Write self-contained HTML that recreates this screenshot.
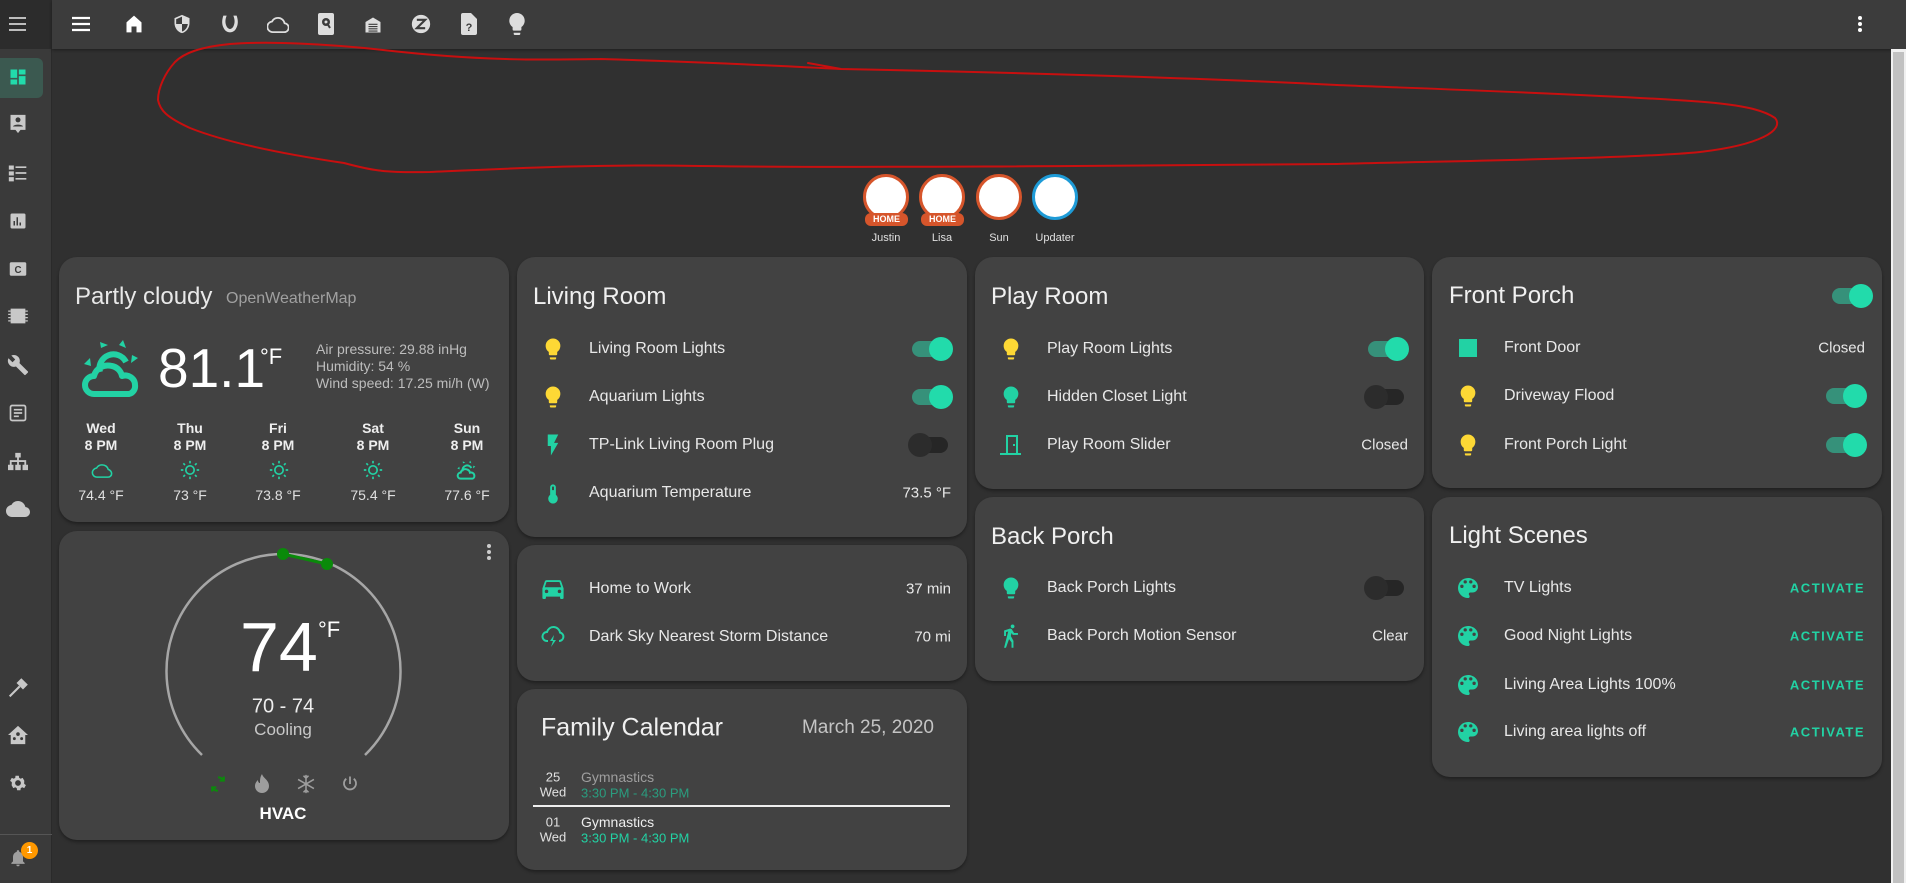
<!DOCTYPE html>
<html><head><meta charset="utf-8"><style>
*{box-sizing:border-box;margin:0;padding:0}
body{width:1906px;height:883px;overflow:hidden;background:#303030;font-family:"Liberation Sans",Arial,sans-serif;color:#e1e1e1;position:relative}
.a{position:absolute}
.card{position:absolute;background:#424242;border-radius:18px;box-shadow:0 2px 3px rgba(0,0,0,.35)}
.t{position:absolute;white-space:nowrap}
.title{font-size:24px;color:#f0f0f0}
.row{font-size:16px;color:#e8e8e8}
.ic{position:absolute;transform:translate(-50%,-50%)}
.tg{position:absolute;width:43px;height:24px;transform:translateY(-50%)}
.tg .tr{position:absolute;left:4px;top:4px;width:34px;height:16px;border-radius:8px;background:#36917a}
.tg .kn{position:absolute;top:0;left:21px;width:24px;height:24px;border-radius:50%;background:#22dbab}
.tg.off .tr{background:#262626}
.tg.off .kn{left:-2px;background:#2c2c2c}
.val{position:absolute;font-size:15px;color:#e8e8e8;transform:translate(-100%,-50%);white-space:nowrap}
.act{position:absolute;font-size:13px;font-weight:bold;color:#22d2a4;letter-spacing:1.5px;transform:translate(-100%,-50%)}
.rt{transform:translateY(-50%)}
.fc{position:absolute;text-align:center;transform:translateX(-50%);font-size:14px;font-weight:bold;color:#eee;line-height:17px}
.ft{position:absolute;transform:translate(-50%,-50%);font-size:14px;color:#e0e0e0;white-space:nowrap}
</style></head><body>

<!-- sidebar -->
<div class="a" style="left:0;top:0;width:52px;height:883px;background:#3a3a3a;border-right:1px solid #2a2a2a"></div>
<div class="a" style="left:0;top:0;width:52px;height:49px;background:#2c2c2c"></div>
<svg class="a" style="left:8px;top:15px" width="20" height="18" viewBox="0 0 20 18"><path d="M1 3h17M1 9h17M1 15h17" stroke="#bdbdbd" stroke-width="2"/></svg>
<div class="a" style="left:0;top:58px;width:43px;height:40px;background:#3b5950;border-radius:0 6px 6px 0"></div>
<svg class="ic" style="left:18px;top:77px" width="20" height="20" viewBox="0 0 24 24"><path d="M3 3h8v10H3zM13 3h8v6h-8zM3 15h8v6H3zM13 11h8v10h-8z" fill="#22dbab"/></svg>
<svg class="ic" style="left:18px;top:124px" width="20" height="22" viewBox="0 0 24 26"><path d="M3 2h18v18h-6l-3 4-3-4H3z" fill="#c8c8c8"/><circle cx="12" cy="8" r="3" fill="#3a3a3a"/><path d="M6 16c1-3 11-3 12 0z" fill="#3a3a3a"/></svg>
<svg class="ic" style="left:18px;top:173px" width="20" height="20" viewBox="0 0 24 24"><path d="M2 4h4v3H2zM9 5h13M2 11h4v3H2zM9 12h13M2 18h4v3H2zM9 19h13" stroke="#c8c8c8" stroke-width="2" fill="#c8c8c8"/></svg>
<svg class="ic" style="left:18px;top:221px" width="18" height="18" viewBox="0 0 24 24"><rect x="2" y="2" width="20" height="20" rx="2" fill="#c8c8c8"/><path d="M7 18v-6M11 18V7M15 18v-4" stroke="#3a3a3a" stroke-width="2"/></svg>
<svg class="ic" style="left:18px;top:269px" width="18" height="16" viewBox="0 0 24 20"><rect x="1" y="1" width="22" height="18" rx="2" fill="#c8c8c8"/><text x="12" y="15" font-size="13" font-weight="bold" text-anchor="middle" fill="#3a3a3a" font-family="Liberation Sans">C</text></svg>
<svg class="ic" style="left:18px;top:316px" width="20" height="18" viewBox="0 0 24 22"><rect x="3" y="2" width="18" height="18" fill="#c8c8c8"/><path d="M0 5h3M0 9h3M0 13h3M0 17h3M21 5h3M21 9h3M21 13h3M21 17h3" stroke="#c8c8c8" stroke-width="1.5"/></svg>
<svg class="ic" style="left:18px;top:365px" width="22" height="22" viewBox="0 0 24 24"><path d="M22.7 19l-9.1-9.1c.9-2.3.4-5-1.5-6.9-2-2-5-2.4-7.4-1.3L9 6 6 9 1.6 4.7C.4 7.1.9 10.1 2.9 12.1c1.9 1.9 4.6 2.4 6.9 1.5l9.1 9.1c.4.4 1 .4 1.4 0l2.3-2.3c.5-.4.5-1.1.1-1.4z" fill="#c8c8c8"/></svg>
<svg class="ic" style="left:18px;top:413px" width="20" height="20" viewBox="0 0 24 24"><rect x="3" y="3" width="18" height="18" rx="2" fill="none" stroke="#c8c8c8" stroke-width="2"/><path d="M7 8h10M7 12h10M7 16h6" stroke="#c8c8c8" stroke-width="2"/></svg>
<svg class="ic" style="left:18px;top:462px" width="22" height="20" viewBox="0 0 24 22"><path d="M9 1h6v5h-2v3h8v5h2v6h-6v-6h2v-3h-6v3h2v6H9v-6h2v-3H5v3h2v6H1v-6h2V9h8V6H9z" fill="#c8c8c8"/></svg>
<svg class="ic" style="left:18px;top:509px" width="24" height="18" viewBox="0 0 24 18"><path d="M19.4 7C18.7 3.6 15.7 1 12 1 9.1 1 6.6 2.6 5.4 5 2.3 5.4 0 7.9 0 11c0 3.3 2.7 6 6 6h13c2.8 0 5-2.2 5-5 0-2.6-2-4.8-4.6-5z" fill="#c8c8c8"/></svg>
<svg class="ic" style="left:18px;top:688px" width="20" height="20" viewBox="0 0 24 24"><path d="M2 22L14 10M12 6l4-4 6 6-4 4z" stroke="#c8c8c8" stroke-width="2.5" fill="#c8c8c8"/></svg>
<svg class="ic" style="left:18px;top:735px" width="22" height="20" viewBox="0 0 24 22"><path d="M12 1L1 11h3v10h16V11h3z" fill="#c8c8c8"/><circle cx="12" cy="10" r="2" fill="#3a3a3a"/><circle cx="8" cy="15" r="1.6" fill="#3a3a3a"/><circle cx="16" cy="15" r="1.6" fill="#3a3a3a"/></svg>
<svg class="ic" style="left:18px;top:783px" width="20" height="20" viewBox="0 0 24 24"><path d="M12 15.5A3.5 3.5 0 1 1 12 8.5a3.5 3.5 0 0 1 0 7zm7.4-2.5l2.1 1.6-2 3.5-2.5-1a7.3 7.3 0 0 1-1.7 1l-.4 2.6h-4l-.4-2.6a7.3 7.3 0 0 1-1.7-1l-2.5 1-2-3.5L4.6 13a7 7 0 0 1 0-2L2.5 9.4l2-3.5 2.5 1c.5-.4 1.1-.7 1.7-1L9 3.3h4l.4 2.6c.6.3 1.200.6 1.7 1l2.5-1 2 3.5L19.4 11a7 7 0 0 1 0 2z" fill="#c8c8c8" fill-rule="evenodd"/></svg>
<div class="a" style="left:0;top:834px;width:52px;height:1px;background:#555"></div>
<svg class="ic" style="left:18px;top:858px" width="20" height="20" viewBox="0 0 24 24"><path d="M12 22a2 2 0 0 0 2-2h-4a2 2 0 0 0 2 2zm6-6v-5c0-3-1.6-5.6-4.5-6.3V4a1.5 1.5 0 0 0-3 0v.7C7.6 5.4 6 8 6 11v5l-2 2v1h16v-1z" fill="#9e9e9e"/></svg>
<div class="a" style="left:21px;top:842px;width:17px;height:17px;border-radius:50%;background:#ff9800;color:#fff;font-size:10px;font-weight:bold;text-align:center;line-height:17px">1</div>

<!-- top bar -->
<div class="a" style="left:52px;top:0;width:1854px;height:49px;background:#3c3c3c;box-shadow:0 1px 3px rgba(0,0,0,.4)"></div>
<svg class="ic" style="left:81px;top:24px" width="20" height="16" viewBox="0 0 20 16"><path d="M1 2h18M1 8h18M1 14h18" stroke="#fff" stroke-width="2.2"/></svg>
<svg class="ic" style="left:134px;top:24px" width="20" height="20" viewBox="0 0 24 24"><path d="M12 2L3 10v12h6v-7h6v7h6V10z" fill="#fff"/></svg>
<svg class="ic" style="left:182px;top:24px" width="20" height="22" viewBox="0 0 24 24"><path d="M12 1L3 5v6c0 5.5 3.8 10.7 9 12 5.2-1.3 9-6.5 9-12V5z" fill="#ddd"/><path d="M12 3.2v8.8H5V6.3zM12 12h7c-.5 4.2-3.3 8-7 9z" fill="#3c3c3c"/></svg>
<svg class="ic" style="left:230px;top:24px" width="20" height="22" viewBox="0 0 24 24"><path d="M4 2h4c-2 5-2 9 0 13 1 2 3 3 4 3s3-1 4-3c2-4 2-8 0-13h4c2 6 2 11-1 16-1.6 2.7-4.3 4-7 4s-5.4-1.3-7-4C2 13 2 8 4 2z" fill="#ddd"/></svg>
<svg class="ic" style="left:278px;top:25px" width="22" height="16" viewBox="0 0 24 18"><path d="M19.4 7C18.7 3.6 15.7 1 12 1 9.1 1 6.6 2.6 5.4 5 2.3 5.4 0 7.9 0 11c0 3.3 2.7 6 6 6h13c2.8 0 5-2.2 5-5 0-2.6-2-4.8-4.6-5z" fill="none" stroke="#ddd" stroke-width="2"/></svg>
<svg class="ic" style="left:326px;top:24px" width="16" height="22" viewBox="0 0 16 22"><rect x="0" y="0" width="16" height="22" rx="2" fill="#ddd"/><circle cx="8" cy="9" r="4" fill="#3c3c3c"/><circle cx="8" cy="9" r="1.5" fill="#ddd"/><path d="M9 10l3 5" stroke="#3c3c3c" stroke-width="2"/></svg>
<svg class="ic" style="left:373px;top:25px" width="18" height="18" viewBox="0 0 24 24"><path d="M12 2L2 8v14h20V8z" fill="#ddd"/><path d="M6 11h12M6 14h12M6 17h12M6 20h12" stroke="#3c3c3c" stroke-width="1.5"/></svg>
<svg class="ic" style="left:421px;top:24px" width="20" height="20" viewBox="0 0 24 24"><circle cx="12" cy="12" r="11" fill="#ddd"/><path d="M7 7h10L7 17h10" stroke="#3c3c3c" stroke-width="2.6" fill="none"/></svg>
<svg class="ic" style="left:469px;top:24px" width="16" height="22" viewBox="0 0 16 22"><path d="M0 2a2 2 0 0 1 2-2h8l6 6v14a2 2 0 0 1-2 2H2a2 2 0 0 1-2-2z" fill="#ddd"/><text x="8" y="18" font-size="11" font-weight="bold" text-anchor="middle" fill="#3c3c3c" font-family="Liberation Sans">?</text></svg>
<svg class="ic" style="left:517px;top:24px" width="16" height="22" viewBox="5 2 14 20"><path d="M12,2A7,7 0 0,0 5,9C5,11.38 6.19,13.47 8,14.74V17A1,1 0 0,0 9,18H15A1,1 0 0,0 16,17V14.74C17.81,13.47 19,11.38 19,9A7,7 0 0,0 12,2M9,21A1,1 0 0,0 10,22H14A1,1 0 0,0 15,21V20H9V21Z" fill="#ddd"/></svg>
<svg class="ic" style="left:1860px;top:24px" width="6" height="18" viewBox="0 0 6 18"><circle cx="3" cy="3" r="2" fill="#fff"/><circle cx="3" cy="9" r="2" fill="#fff"/><circle cx="3" cy="15" r="2" fill="#fff"/></svg>

<!-- scrollbar -->
<div class="a" style="left:1891px;top:49px;width:15px;height:834px;background:#f0f0f0"></div>
<div class="a" style="left:1893px;top:52px;width:11px;height:831px;background:#c1c1c1"></div>

<!-- red scribble -->
<svg class="a" style="left:0;top:0" width="1906" height="883"><path d="M808,63 L841,69 M600,59 C540,60 480,61 383,50 C330,44 268,41 230,44 C200,47 184,53 175,62 C165,73 158,88 158,100 C160,110 166,117 190,128 C230,144 290,155 344,163 C370,170 383,173 430,172 C520,168 600,164 700,166 C850,168 1100,166 1337,164 C1500,160 1640,158 1700,152 C1760,145 1785,130 1775,118 C1755,104 1710,101 1600,96 C1480,90 1380,87 1337,85 C1200,78 1000,72 841,69 C760,65 700,62 600,59" stroke="#c80f0f" stroke-width="2" fill="none" stroke-linecap="round"/></svg>

<!-- badges -->
<div class="a" style="left:863px;top:174px;width:46px;height:46px;border-radius:50%;background:#fff;border:3px solid #d6552b"></div>
<div class="a" style="left:919px;top:174px;width:46px;height:46px;border-radius:50%;background:#fff;border:3px solid #d6552b"></div>
<div class="a" style="left:976px;top:174px;width:46px;height:46px;border-radius:50%;background:#fff;border:3px solid #d6552b"></div>
<div class="a" style="left:1032px;top:174px;width:46px;height:46px;border-radius:50%;background:#fff;border:3px solid #1e9bd7"></div>
<div class="a" style="left:865px;top:213px;width:43px;height:13px;border-radius:6px;background:#d6552b;color:#fff;font-size:9px;font-weight:bold;text-align:center;line-height:13px">HOME</div>
<div class="a" style="left:921px;top:213px;width:43px;height:13px;border-radius:6px;background:#d6552b;color:#fff;font-size:9px;font-weight:bold;text-align:center;line-height:13px">HOME</div>
<div class="ft" style="left:886px;top:238px;font-size:11px">Justin</div>
<div class="ft" style="left:942px;top:238px;font-size:11px">Lisa</div>
<div class="ft" style="left:999px;top:238px;font-size:11px">Sun</div>
<div class="ft" style="left:1055px;top:238px;font-size:11px">Updater</div>

<!-- weather card -->
<div class="card" style="left:59px;top:257px;width:450px;height:265px"></div>
<div class="t title rt" style="left:75px;top:297px;color:#e8e8e8">Partly cloudy</div>
<div class="t rt" style="left:226px;top:299px;font-size:16px;color:#a0a0a0">OpenWeatherMap</div>
<svg class="a" style="left:80px;top:336px" width="66" height="64" viewBox="0 0 66 64"><path d="M20 6l8 3-7 3zM43 4l3 8-7-3zM58 22l-7 5 1-8zM4 28l6-6 1 8z" fill="#22d2a4"/><path d="M20 36a14 14 0 0 1 26-10" stroke="#22d2a4" stroke-width="6" fill="none"/><path d="M14 58a9 9 0 0 1 0-18c2-8 10-12 18-10 5 1 9 5 10 10 6-2 13 2 13 9a8 8 0 0 1-6 9z" stroke="#22d2a4" stroke-width="6" fill="none" stroke-linejoin="round"/></svg>
<div class="t" style="left:158px;top:336px;font-size:55px;color:#fff">81.1</div>
<div class="t" style="left:260px;top:344px;font-size:22px;color:#fff">°F</div>
<div class="t" style="left:316px;top:341px;font-size:14px;color:#bdbdbd;line-height:17px">Air pressure: 29.88 inHg<br>Humidity: 54 %<br>Wind speed: 17.25 mi/h (W)</div>
<div class="fc" style="left:101px;top:420px">Wed<br>8 PM</div>
<div class="fc" style="left:190px;top:420px">Thu<br>8 PM</div>
<div class="fc" style="left:278px;top:420px">Fri<br>8 PM</div>
<div class="fc" style="left:373px;top:420px">Sat<br>8 PM</div>
<div class="fc" style="left:467px;top:420px">Sun<br>8 PM</div>
<svg class="ic" style="left:102px;top:471px" width="22" height="14" viewBox="0 0 24 16"><path d="M19 6C18.3 3 15.5 1 12 1 9.3 1 7 2.5 5.8 4.6 3 5 1 7.3 1 10c0 2.8 2.2 5 5 5h13c2.2 0 4-1.8 4-4s-1.8-4-4-5z" fill="none" stroke="#22d2a4" stroke-width="1.8"/></svg>
<svg class="ic" style="left:190px;top:470px" width="20" height="20" viewBox="0 0 24 24"><circle cx="12" cy="12" r="5" fill="none" stroke="#22d2a4" stroke-width="2"/><path d="M12 1v3M12 20v3M1 12h3M20 12h3M4 4l2 2M18 18l2 2M4 20l2-2M18 6l2-2" stroke="#22d2a4" stroke-width="2"/></svg>
<svg class="ic" style="left:279px;top:470px" width="20" height="20" viewBox="0 0 24 24"><circle cx="12" cy="12" r="5" fill="none" stroke="#22d2a4" stroke-width="2"/><path d="M12 1v3M12 20v3M1 12h3M20 12h3M4 4l2 2M18 18l2 2M4 20l2-2M18 6l2-2" stroke="#22d2a4" stroke-width="2"/></svg>
<svg class="ic" style="left:373px;top:470px" width="20" height="20" viewBox="0 0 24 24"><circle cx="12" cy="12" r="5" fill="none" stroke="#22d2a4" stroke-width="2"/><path d="M12 1v3M12 20v3M1 12h3M20 12h3M4 4l2 2M18 18l2 2M4 20l2-2M18 6l2-2" stroke="#22d2a4" stroke-width="2"/></svg>
<svg class="ic" style="left:467px;top:470px" width="22" height="22" viewBox="0 0 66 64"><path d="M20 6l8 3-7 3zM43 4l3 8-7-3zM58 22l-7 5 1-8zM4 28l6-6 1 8z" fill="#22d2a4"/><path d="M20 36a14 14 0 0 1 26-10" stroke="#22d2a4" stroke-width="6" fill="none"/><path d="M14 58a9 9 0 0 1 0-18c2-8 10-12 18-10 5 1 9 5 10 10 6-2 13 2 13 9a8 8 0 0 1-6 9z" stroke="#22d2a4" stroke-width="6" fill="none"/></svg>
<div class="ft" style="left:101px;top:495px">74.4 °F</div>
<div class="ft" style="left:190px;top:495px">73 °F</div>
<div class="ft" style="left:278px;top:495px">73.8 °F</div>
<div class="ft" style="left:373px;top:495px">75.4 °F</div>
<div class="ft" style="left:467px;top:495px">77.6 °F</div>

<!-- thermostat -->
<div class="card" style="left:59px;top:531px;width:450px;height:309px"></div>
<svg class="a" style="left:59px;top:531px" width="450" height="309"><path d="M143 224 A117 117 0 1 1 306 224" stroke="#a6a6a6" stroke-width="2.5" fill="none"/><path d="M224 23 L268 33" stroke="#0a8a0a" stroke-width="3"/><circle cx="224" cy="23" r="6" fill="#0a8a0a"/><circle cx="268" cy="33" r="6" fill="#0a8a0a"/><circle cx="430" cy="15" r="2" fill="#ccc"/><circle cx="430" cy="21" r="2" fill="#ccc"/><circle cx="430" cy="27" r="2" fill="#ccc"/></svg>
<div class="t" style="left:240px;top:607px;font-size:70px;color:#fff">74</div>
<div class="t" style="left:318px;top:617px;font-size:22px;color:#fff">°F</div>
<div class="ft" style="left:283px;top:707px;font-size:20px;color:#eee">70 - 74</div>
<div class="ft" style="left:283px;top:730px;font-size:17px;color:#c8c8c8">Cooling</div>
<svg class="ic" style="left:218px;top:784px" width="20" height="22" viewBox="0 0 24 24"><path d="M12 4a8 8 0 0 1 7 4M19 3v5h-5M12 20a8 8 0 0 1-7-4M5 21v-5h5" stroke="#0b8a0b" stroke-width="2.4" fill="none"/></svg>
<svg class="ic" style="left:262px;top:784px" width="16" height="20" viewBox="0 0 16 20"><path d="M8 0c1 4 7 6 7 12a7 7 0 0 1-14 0c0-3 2-5 3-6 0 2 1 3 2 3 0-3 0-6 2-9z" fill="#9e9e9e"/></svg>
<svg class="ic" style="left:306px;top:784px" width="20" height="20" viewBox="0 0 24 24"><path d="M12 1v22M2.5 6.5l19 11M2.5 17.5l19-11M9 2l3 3 3-3M9 22l3-3 3 3" stroke="#9e9e9e" stroke-width="1.8" fill="none"/></svg>
<svg class="ic" style="left:350px;top:784px" width="18" height="20" viewBox="0 0 24 24"><path d="M12 2v10M7 5a8 8 0 1 0 10 0" stroke="#9e9e9e" stroke-width="2.4" fill="none"/></svg>
<div class="ft" style="left:283px;top:814px;font-size:17px;font-weight:bold;color:#fff">HVAC</div>

<!-- Living Room -->
<div class="card" style="left:517px;top:257px;width:450px;height:280px"></div>
<div class="t title rt" style="left:533px;top:297px">Living Room</div>
<svg class="ic" style="left:553px;top:349px" width="15" height="21" viewBox="5 2 14 20"><path d="M12,2A7,7 0 0,0 5,9C5,11.38 6.19,13.47 8,14.74V17A1,1 0 0,0 9,18H15A1,1 0 0,0 16,17V14.74C17.81,13.47 19,11.38 19,9A7,7 0 0,0 12,2M9,21A1,1 0 0,0 10,22H14A1,1 0 0,0 15,21V20H9V21Z" fill="#fdd835"/></svg>
<div class="t row rt" style="left:589px;top:349px">Living Room Lights</div>
<div class="tg" style="left:908px;top:349px"><div class="tr"></div><div class="kn"></div></div>
<svg class="ic" style="left:553px;top:397px" width="15" height="21" viewBox="5 2 14 20"><path d="M12,2A7,7 0 0,0 5,9C5,11.38 6.19,13.47 8,14.74V17A1,1 0 0,0 9,18H15A1,1 0 0,0 16,17V14.74C17.81,13.47 19,11.38 19,9A7,7 0 0,0 12,2M9,21A1,1 0 0,0 10,22H14A1,1 0 0,0 15,21V20H9V21Z" fill="#fdd835"/></svg>
<div class="t row rt" style="left:589px;top:397px">Aquarium Lights</div>
<div class="tg" style="left:908px;top:397px"><div class="tr"></div><div class="kn"></div></div>
<svg class="ic" style="left:553px;top:445px" width="12" height="21" viewBox="7 2 10 20"><path d="M7,2V13H10V22L17,10H13L17,2H7Z" fill="#22d2a4"/></svg>
<div class="t row rt" style="left:589px;top:445px">TP-Link Living Room Plug</div>
<div class="tg off" style="left:910px;top:445px"><div class="tr"></div><div class="kn"></div></div>
<svg class="ic" style="left:553px;top:493px" width="12" height="21" viewBox="7 0 10 22"><path d="M15 13V5A3 3 0 0 0 9 5V13A5 5 0 1 0 15 13M12 4A1 1 0 0 1 13 5V8H11V5A1 1 0 0 1 12 4Z" fill="#22d2a4"/></svg>
<div class="t row rt" style="left:589px;top:493px">Aquarium Temperature</div>
<div class="val" style="left:951px;top:493px">73.5 °F</div>

<!-- travel -->
<div class="card" style="left:517px;top:545px;width:450px;height:136px"></div>
<svg class="ic" style="left:553px;top:589px" width="22" height="20" viewBox="3 4 18 17"><path d="M5,11L6.5,6.5H17.5L19,11M17.5,16A1.5,1.5 0 0,1 16,14.5A1.5,1.5 0 0,1 17.5,13A1.5,1.5 0 0,1 19,14.5A1.5,1.5 0 0,1 17.5,16M6.5,16A1.5,1.5 0 0,1 5,14.5A1.5,1.5 0 0,1 6.5,13A1.5,1.5 0 0,1 8,14.5A1.5,1.5 0 0,1 6.5,16M18.92,6C18.72,5.42 18.16,5 17.5,5H6.5C5.84,5 5.28,5.42 5.08,6L3,12V20A1,1 0 0,0 4,21H5A1,1 0 0,0 6,20V19H18V20A1,1 0 0,0 19,21H20A1,1 0 0,0 21,20V12L18.92,6Z" fill="#22d2a4"/></svg>
<div class="t row rt" style="left:589px;top:589px">Home to Work</div>
<div class="val" style="left:951px;top:589px">37 min</div>
<svg class="ic" style="left:553px;top:637px" width="24" height="22" viewBox="0 0 24 22"><path d="M7 15H6a4.5 4.5 0 0 1 0-9c1-3 3.5-5 6.5-5 3.3 0 6 2.5 6.5 5.5a4.3 4.3 0 0 1-1 8.5" stroke="#22d2a4" stroke-width="2" fill="none"/><path d="M13 9l-4 6h3l-2 6 5-7h-3z" fill="#22d2a4"/></svg>
<div class="t row rt" style="left:589px;top:637px">Dark Sky Nearest Storm Distance</div>
<div class="val" style="left:951px;top:637px">70 mi</div>

<!-- calendar -->
<div class="card" style="left:517px;top:689px;width:450px;height:181px"></div>
<div class="t rt" style="left:541px;top:728px;font-size:25px;color:#f0f0f0">Family Calendar</div>
<div class="val" style="left:934px;top:728px;font-size:19px;color:#c4c4c4">March 25, 2020</div>
<div class="ft" style="left:553px;top:777px;font-size:13px">25</div>
<div class="ft" style="left:553px;top:792px;font-size:13px">Wed</div>
<div class="t rt" style="left:581px;top:777px;font-size:14px;color:#9e9e9e">Gymnastics</div>
<div class="t rt" style="left:581px;top:793px;font-size:13px;color:#2a9d7f">3:30 PM - 4:30 PM</div>
<div class="a" style="left:533px;top:805px;width:417px;height:2px;background:#eee"></div>
<div class="ft" style="left:553px;top:822px;font-size:13px">01</div>
<div class="ft" style="left:553px;top:837px;font-size:13px">Wed</div>
<div class="t rt" style="left:581px;top:822px;font-size:14px;color:#eee">Gymnastics</div>
<div class="t rt" style="left:581px;top:838px;font-size:13px;color:#22d2a4">3:30 PM - 4:30 PM</div>

<!-- Play Room -->
<div class="card" style="left:975px;top:257px;width:449px;height:232px"></div>
<div class="t title rt" style="left:991px;top:297px">Play Room</div>
<svg class="ic" style="left:1011px;top:349px" width="15" height="21" viewBox="5 2 14 20"><path d="M12,2A7,7 0 0,0 5,9C5,11.38 6.19,13.47 8,14.74V17A1,1 0 0,0 9,18H15A1,1 0 0,0 16,17V14.74C17.81,13.47 19,11.38 19,9A7,7 0 0,0 12,2M9,21A1,1 0 0,0 10,22H14A1,1 0 0,0 15,21V20H9V21Z" fill="#fdd835"/></svg>
<div class="t row rt" style="left:1047px;top:349px">Play Room Lights</div>
<div class="tg" style="left:1364px;top:349px"><div class="tr"></div><div class="kn"></div></div>
<svg class="ic" style="left:1011px;top:397px" width="15" height="21" viewBox="5 2 14 20"><path d="M12,2A7,7 0 0,0 5,9C5,11.38 6.19,13.47 8,14.74V17A1,1 0 0,0 9,18H15A1,1 0 0,0 16,17V14.74C17.81,13.47 19,11.38 19,9A7,7 0 0,0 12,2M9,21A1,1 0 0,0 10,22H14A1,1 0 0,0 15,21V20H9V21Z" fill="#22d2a4"/></svg>
<div class="t row rt" style="left:1047px;top:397px">Hidden Closet Light</div>
<div class="tg off" style="left:1366px;top:397px"><div class="tr"></div><div class="kn"></div></div>
<svg class="ic" style="left:1011px;top:445px" width="22" height="20" viewBox="0 0 22 20"><path d="M0 19h21M7 19V1h10v18" stroke="#22d2a4" stroke-width="2" fill="none"/><rect x="13" y="9" width="2" height="2" fill="#22d2a4"/></svg>
<div class="t row rt" style="left:1047px;top:445px">Play Room Slider</div>
<div class="val" style="left:1408px;top:445px">Closed</div>

<!-- Back Porch -->
<div class="card" style="left:975px;top:497px;width:449px;height:184px"></div>
<div class="t title rt" style="left:991px;top:537px">Back Porch</div>
<svg class="ic" style="left:1011px;top:588px" width="15" height="21" viewBox="5 2 14 20"><path d="M12,2A7,7 0 0,0 5,9C5,11.38 6.19,13.47 8,14.74V17A1,1 0 0,0 9,18H15A1,1 0 0,0 16,17V14.74C17.81,13.47 19,11.38 19,9A7,7 0 0,0 12,2M9,21A1,1 0 0,0 10,22H14A1,1 0 0,0 15,21V20H9V21Z" fill="#22d2a4"/></svg>
<div class="t row rt" style="left:1047px;top:588px">Back Porch Lights</div>
<div class="tg off" style="left:1366px;top:588px"><div class="tr"></div><div class="kn"></div></div>
<svg class="ic" style="left:1011px;top:636px" width="16" height="24" viewBox="5 0 15 22"><path d="M14.12,10H19V8.2H15.38L13.38,4.87C13.08,4.37 12.54,4.03 11.92,4.03C11.74,4.03 11.58,4.06 11.42,4.11L6,5.8V11H7.8V7.33L9.91,6.67L6,22H7.8L10.67,13.89L13,17V22H14.8V15.59L12.31,11.05L13.04,8.18M14,3.8C15,3.8 15.8,3 15.8,2C15.8,1 15,0.2 14,0.2C13,0.2 12.2,1 12.2,2C12.2,3 13,3.8 14,3.8Z" fill="#22d2a4"/></svg>
<div class="t row rt" style="left:1047px;top:636px">Back Porch Motion Sensor</div>
<div class="val" style="left:1408px;top:636px">Clear</div>

<!-- Front Porch -->
<div class="card" style="left:1432px;top:257px;width:450px;height:231px"></div>
<div class="t title rt" style="left:1449px;top:296px">Front Porch</div>
<div class="tg" style="left:1828px;top:296px"><div class="tr"></div><div class="kn"></div></div>
<div class="a" style="left:1459px;top:339px;width:18px;height:18px;background:#22d2a4"></div>
<div class="t row rt" style="left:1504px;top:348px">Front Door</div>
<div class="val" style="left:1865px;top:348px">Closed</div>
<svg class="ic" style="left:1468px;top:396px" width="15" height="21" viewBox="5 2 14 20"><path d="M12,2A7,7 0 0,0 5,9C5,11.38 6.19,13.47 8,14.74V17A1,1 0 0,0 9,18H15A1,1 0 0,0 16,17V14.74C17.81,13.47 19,11.38 19,9A7,7 0 0,0 12,2M9,21A1,1 0 0,0 10,22H14A1,1 0 0,0 15,21V20H9V21Z" fill="#fdd835"/></svg>
<div class="t row rt" style="left:1504px;top:396px">Driveway Flood</div>
<div class="tg" style="left:1822px;top:396px"><div class="tr"></div><div class="kn"></div></div>
<svg class="ic" style="left:1468px;top:445px" width="15" height="21" viewBox="5 2 14 20"><path d="M12,2A7,7 0 0,0 5,9C5,11.38 6.19,13.47 8,14.74V17A1,1 0 0,0 9,18H15A1,1 0 0,0 16,17V14.74C17.81,13.47 19,11.38 19,9A7,7 0 0,0 12,2M9,21A1,1 0 0,0 10,22H14A1,1 0 0,0 15,21V20H9V21Z" fill="#fdd835"/></svg>
<div class="t row rt" style="left:1504px;top:445px">Front Porch Light</div>
<div class="tg" style="left:1822px;top:445px"><div class="tr"></div><div class="kn"></div></div>

<!-- Light Scenes -->
<div class="card" style="left:1432px;top:497px;width:450px;height:280px"></div>
<div class="t title rt" style="left:1449px;top:536px">Light Scenes</div>
<svg class="ic" style="left:1468px;top:588px" width="20" height="20" viewBox="3 3 18 18"><path fill-rule="evenodd" d="M17.5,12A1.5,1.5 0 0,1 16,10.5A1.5,1.5 0 0,1 17.5,9A1.5,1.5 0 0,1 19,10.5A1.5,1.5 0 0,1 17.5,12M14.5,8A1.5,1.5 0 0,1 13,6.5A1.5,1.5 0 0,1 14.5,5A1.5,1.5 0 0,1 16,6.5A1.5,1.5 0 0,1 14.5,8M9.5,8A1.5,1.5 0 0,1 8,6.5A1.5,1.5 0 0,1 9.5,5A1.5,1.5 0 0,1 11,6.5A1.5,1.5 0 0,1 9.5,8M6.5,12A1.5,1.5 0 0,1 5,10.5A1.5,1.5 0 0,1 6.5,9A1.5,1.5 0 0,1 8,10.5A1.5,1.5 0 0,1 6.5,12M12,3A9,9 0 0,0 3,12A9,9 0 0,0 12,21A1.5,1.5 0 0,0 13.5,19.5C13.5,19.11 13.35,18.76 13.11,18.5C12.88,18.23 12.73,17.88 12.73,17.5A1.5,1.5 0 0,1 14.23,16H16A5,5 0 0,0 21,11C21,6.58 16.97,3 12,3Z" fill="#22d2a4"/></svg>
<div class="t row rt" style="left:1504px;top:588px">TV Lights</div>
<div class="act" style="left:1865px;top:588px">ACTIVATE</div>
<svg class="ic" style="left:1468px;top:636px" width="20" height="20" viewBox="3 3 18 18"><path fill-rule="evenodd" d="M17.5,12A1.5,1.5 0 0,1 16,10.5A1.5,1.5 0 0,1 17.5,9A1.5,1.5 0 0,1 19,10.5A1.5,1.5 0 0,1 17.5,12M14.5,8A1.5,1.5 0 0,1 13,6.5A1.5,1.5 0 0,1 14.5,5A1.5,1.5 0 0,1 16,6.5A1.5,1.5 0 0,1 14.5,8M9.5,8A1.5,1.5 0 0,1 8,6.5A1.5,1.5 0 0,1 9.5,5A1.5,1.5 0 0,1 11,6.5A1.5,1.5 0 0,1 9.5,8M6.5,12A1.5,1.5 0 0,1 5,10.5A1.5,1.5 0 0,1 6.5,9A1.5,1.5 0 0,1 8,10.5A1.5,1.5 0 0,1 6.5,12M12,3A9,9 0 0,0 3,12A9,9 0 0,0 12,21A1.5,1.5 0 0,0 13.5,19.5C13.5,19.11 13.35,18.76 13.11,18.5C12.88,18.23 12.73,17.88 12.73,17.5A1.5,1.5 0 0,1 14.23,16H16A5,5 0 0,0 21,11C21,6.58 16.97,3 12,3Z" fill="#22d2a4"/></svg>
<div class="t row rt" style="left:1504px;top:636px">Good Night Lights</div>
<div class="act" style="left:1865px;top:636px">ACTIVATE</div>
<svg class="ic" style="left:1468px;top:685px" width="20" height="20" viewBox="3 3 18 18"><path fill-rule="evenodd" d="M17.5,12A1.5,1.5 0 0,1 16,10.5A1.5,1.5 0 0,1 17.5,9A1.5,1.5 0 0,1 19,10.5A1.5,1.5 0 0,1 17.5,12M14.5,8A1.5,1.5 0 0,1 13,6.5A1.5,1.5 0 0,1 14.5,5A1.5,1.5 0 0,1 16,6.5A1.5,1.5 0 0,1 14.5,8M9.5,8A1.5,1.5 0 0,1 8,6.5A1.5,1.5 0 0,1 9.5,5A1.5,1.5 0 0,1 11,6.5A1.5,1.5 0 0,1 9.5,8M6.5,12A1.5,1.5 0 0,1 5,10.5A1.5,1.5 0 0,1 6.5,9A1.5,1.5 0 0,1 8,10.5A1.5,1.5 0 0,1 6.5,12M12,3A9,9 0 0,0 3,12A9,9 0 0,0 12,21A1.5,1.5 0 0,0 13.5,19.5C13.5,19.11 13.35,18.76 13.11,18.5C12.88,18.23 12.73,17.88 12.73,17.5A1.5,1.5 0 0,1 14.23,16H16A5,5 0 0,0 21,11C21,6.58 16.97,3 12,3Z" fill="#22d2a4"/></svg>
<div class="t row rt" style="left:1504px;top:685px">Living Area Lights 100%</div>
<div class="act" style="left:1865px;top:685px">ACTIVATE</div>
<svg class="ic" style="left:1468px;top:732px" width="20" height="20" viewBox="3 3 18 18"><path fill-rule="evenodd" d="M17.5,12A1.5,1.5 0 0,1 16,10.5A1.5,1.5 0 0,1 17.5,9A1.5,1.5 0 0,1 19,10.5A1.5,1.5 0 0,1 17.5,12M14.5,8A1.5,1.5 0 0,1 13,6.5A1.5,1.5 0 0,1 14.5,5A1.5,1.5 0 0,1 16,6.5A1.5,1.5 0 0,1 14.5,8M9.5,8A1.5,1.5 0 0,1 8,6.5A1.5,1.5 0 0,1 9.5,5A1.5,1.5 0 0,1 11,6.5A1.5,1.5 0 0,1 9.5,8M6.5,12A1.5,1.5 0 0,1 5,10.5A1.5,1.5 0 0,1 6.5,9A1.5,1.5 0 0,1 8,10.5A1.5,1.5 0 0,1 6.5,12M12,3A9,9 0 0,0 3,12A9,9 0 0,0 12,21A1.5,1.5 0 0,0 13.5,19.5C13.5,19.11 13.35,18.76 13.11,18.5C12.88,18.23 12.73,17.88 12.73,17.5A1.5,1.5 0 0,1 14.23,16H16A5,5 0 0,0 21,11C21,6.58 16.97,3 12,3Z" fill="#22d2a4"/></svg>
<div class="t row rt" style="left:1504px;top:732px">Living area lights off</div>
<div class="act" style="left:1865px;top:732px">ACTIVATE</div>

</body></html>
